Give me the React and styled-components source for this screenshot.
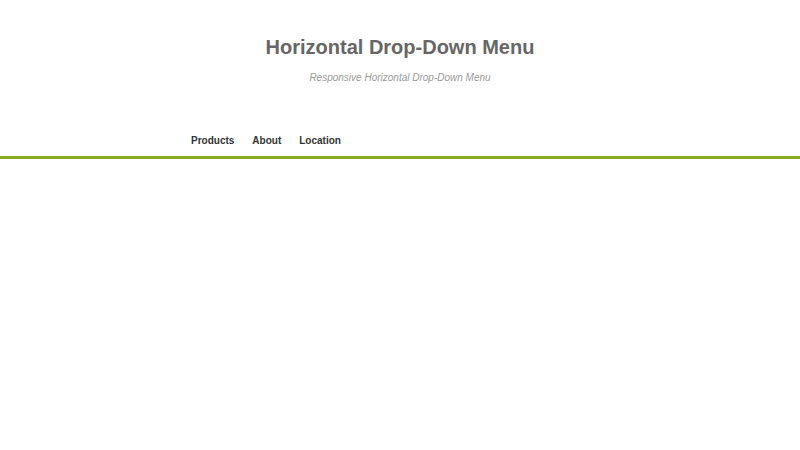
import React from 'react';
import styled, { createGlobalStyle } from 'styled-components';

const GlobalStyle = createGlobalStyle`
  html, body {
    margin: 0;
    padding: 0;
    background: #fff;
    font-family: "Liberation Sans", Arial, sans-serif;
  }
`;

const Header = styled.header`
  text-align: center;
  padding-top: 36px;
`;

const Title = styled.h1`
  margin: 0;
  font-size: 20px;
  font-weight: bold;
  color: #666;
`;

const Subtitle = styled.p`
  margin: 13px 0 0;
  font-size: 10px;
  font-style: italic;
  color: #999;
`;

const NavBar = styled.nav`
  margin-top: 42px;
  border-bottom: 3px solid #8aab22;
  box-shadow: 0 1px 0 #e3eec4;
`;

const NavList = styled.ul`
  display: flex;
  width: 436px;
  margin: 0 auto;
  padding: 0;
  list-style: none;
`;

const NavItem = styled.li`
  a {
    display: block;
    padding: 10px 9px;
    font-size: 10px;
    font-weight: bold;
    color: #333;
    text-decoration: none;
  }
`;

const links = ['Products', 'About', 'Location'];

const App = () => {
    return (
        <>
            <GlobalStyle />
            <Header>
                <Title>Horizontal Drop-Down Menu</Title>
                <Subtitle>Responsive Horizontal Drop-Down Menu</Subtitle>
            </Header>
            <NavBar>
                <NavList>
                    {links.map((label) => (
                        <NavItem key={label}>
                            <a href="#">{label}</a>
                        </NavItem>
                    ))}
                </NavList>
            </NavBar>
        </>
    );
};

export default App;
